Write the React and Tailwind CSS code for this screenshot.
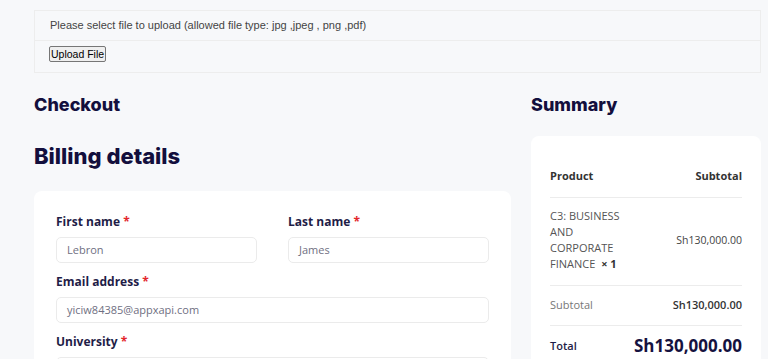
import React from "react";

const heading = { fontFamily: "Inter, 'Noto Sans', sans-serif" };
const body = { fontFamily: "'Open Sans', 'Noto Sans', sans-serif" };

function Field({ label, value, className = "" }) {
  return (
    <div className={"flex flex-col " + className}>
      <label className="text-[12px] leading-[20px] font-bold text-[#1f1d47]">
        {label} <span className="text-[#e3262b]">*</span>
      </label>
      <div className="mt-[5px] h-[26px] rounded-[5px] border border-[#ebebeb] bg-white px-[10px] flex items-center text-[11px] text-[#6f6f82]">
        {value}
      </div>
    </div>
  );
}

export default function App() {
  return (
    <div className="min-h-[359px] bg-[#f7f8fa] pt-[10px] pl-[34px] pr-[7px] overflow-hidden" style={body}>
      <div className="border border-[#ededed]" style={{ fontFamily: "'Liberation Sans', Arial, sans-serif" }}>
        <div className="h-[30px] flex items-center pl-[15px] text-[11px] text-[#444] border-b border-[#ededed]">
          Please select file to upload (allowed file type: jpg ,jpeg , png ,pdf)
        </div>
        <div className="h-[31px] flex items-start pt-[5px] pl-[14px]">
          <button className="h-[16px] px-[1px] text-[10.5px] leading-[14px] text-black bg-[#efefef] border border-[#767676] rounded-[2px]">
            Upload File
          </button>
        </div>
      </div>

      <div className="flex gap-[20px]">
        <div className="w-[477px] flex flex-col">
          <h2 className="mt-[18px] h-[28px] leading-[28px] text-[18px] font-extrabold text-[#130f3d]" style={heading}>
            Checkout
          </h2>
          <h1 className="mt-[21px] h-[32px] leading-[32px] text-[22px] font-extrabold text-[#130f3d]" style={heading}>
            Billing details
          </h1>
          <div className="mt-[19px] bg-white rounded-t-[8px] px-[22px] pt-[21px] pb-[20px] flex flex-col gap-[9px]">
            <div className="grid grid-cols-2 gap-[31px]">
              <Field label="First name" value="Lebron" />
              <Field label="Last name" value="James" />
            </div>
            <Field label="Email address" value="yiciw84385@appxapi.com" />
            <Field label="University" value="" />
          </div>
        </div>

        <div className="w-[230px] flex flex-col">
          <h2 className="mt-[18px] h-[28px] leading-[28px] text-[18px] font-extrabold text-[#130f3d]" style={heading}>
            Summary
          </h2>
          <div className="mt-[17px] bg-white rounded-t-[8px] px-[19px] pt-[30px] pb-[20px]">
            <div className="flex justify-between text-[11px] leading-[20px] font-bold text-[#333] pb-[11px] border-b border-[#ececec]">
              <span>Product</span>
              <span>Subtotal</span>
            </div>
            <div className="flex justify-between items-center pt-[10px] pb-[13px] border-b border-[#ececec] text-[11px] leading-[16px] text-[#555]">
              <div className="w-[85px] uppercase">
                C3: BUSINESS AND CORPORATE FINANCE{" "}
                <strong className="font-bold text-[#333] ml-[3px] whitespace-nowrap">× 1</strong>
              </div>
              <span className="text-[10.5px] text-[#444]">Sh130,000.00</span>
            </div>
            <div className="flex justify-between items-center pt-[11px] pb-[12px] border-b border-[#ececec] text-[11px] leading-[16px]">
              <span className="text-[#777]">Subtotal</span>
              <span className="font-semibold text-[#333]">Sh130,000.00</span>
            </div>
            <div className="flex justify-between items-center pt-[6px]">
              <span className="text-[11px] font-semibold text-[#1f1d47]">Total</span>
              <span className="text-[17px] leading-[28px] font-bold text-[#15123f]">Sh130,000.00</span>
            </div>
          </div>
        </div>
      </div>
    </div>
  );
}
